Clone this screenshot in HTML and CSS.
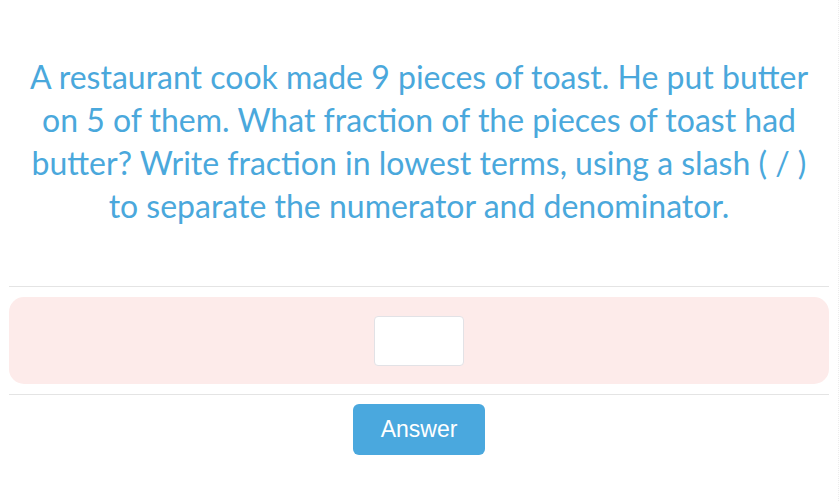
FILE: index.html
```html
<!DOCTYPE html>
<html lang="en">
<head>
    <meta charset="UTF-8">
    <title>Fraction Question</title>
    <link rel="stylesheet" href="styles.css">
</head>
<body>

<div class="page">
    <div class="question">
        A restaurant cook made 9 pieces of toast. He put butter on 5 of them. What fraction of the pieces of toast had butter? Write fraction in lowest terms, using a slash ( / ) to separate the numerator and denominator.
    </div>
    <hr class="divider">
    <div class="answer-box">
        <input type="text" class="answer-input">
    </div>
    <hr class="divider">
    <div class="actions">
        <button class="btn">Answer</button>
    </div>
</div>

</body>
</html>
```

FILE: styles.css
```css
body {
    margin: 0;
    background-color: #fff;
    font-family: 'Lato', sans-serif;
}
.page {
    width: 820px;
    padding: 0 9px;
    height: 501px;
    border-right: 1px dotted #ececec;
}
.question {
    padding: 55px 20px 0;
    height: 286px;
    box-sizing: border-box;
    text-align: center;
    color: #4aa8dc;
    font-size: 32px;
    line-height: 43px;
}
.divider {
    margin: 0;
    border: none;
    border-top: 1px solid #e4e4e4;
}
.answer-box {
    margin: 10px 0;
    height: 87px;
    background-color: #fdebea;
    border-radius: 15px;
    display: flex;
    justify-content: center;
    align-items: center;
}
.answer-input {
    width: 90px;
    height: 50px;
    box-sizing: border-box;
    border: 1px solid #e2e2e6;
    border-radius: 4px;
    background-color: #fff;
    outline: none;
}
.actions {
    display: flex;
    justify-content: center;
    padding-top: 9px;
}
.btn {
    width: 132px;
    height: 51px;
    border: none;
    border-radius: 6px;
    background-color: #4aa8de;
    color: #fff;
    font-family: 'Liberation Sans', Arial, sans-serif;
    font-size: 23px;
    cursor: pointer;
}
```
